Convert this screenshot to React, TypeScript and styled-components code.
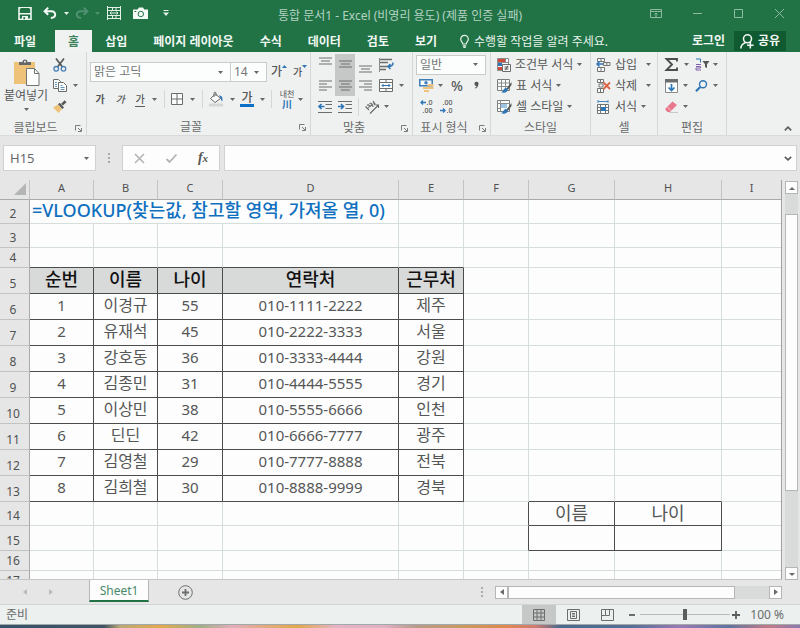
import React from "react";
import styled, { createGlobalStyle, css } from "styled-components";

const GREEN = "#217346";
const INK = "#5a5c5c";
const BLUE = "#2e75b6";
const GOLD = "#efc27a";

const Global = createGlobalStyle`
  * { box-sizing: border-box; }
  html, body { margin: 0; padding: 0; }
  body, button, input, select {
    font-family: "Noto Sans", "Noto Sans CJK KR", sans-serif;
    font-size: 12px;
    line-height: 16px;
    color: #555757;
  }
  button, input, select {
    border: 0;
    padding: 0;
    margin: 0;
    background: transparent;
    border-radius: 0;
    outline: 0;
  }
`;

const Page = styled.div`
  display: flex;
  flex-direction: column;
  height: 100vh;
  overflow: hidden;
  background: #e6e6e6;
`;

const Svg = styled.svg`
  display: block;
  flex: none;
  overflow: visible;
`;

const Caret = ({ color = "#666868" }: { color?: string }) => (
  <Svg width="5" height="3" viewBox="0 0 5 3">
    <path d="M0 0h5L2.5 3z" fill={color} />
  </Svg>
);

/* ---------- title bar ---------- */

const TitleBar = styled.header`
  display: grid;
  grid-template-columns: 180px 1fr 180px;
  align-items: start;
  height: 30px;
  flex: none;
  background: ${GREEN};
  color: #b4d2c2;
`;

const QuickAccess = styled.div`
  display: flex;
  align-items: center;
  height: 26px;
  padding-left: 12px;
`;

const Title = styled.div`
  padding-top: 8px;
  text-align: center;
  white-space: nowrap;
`;

const WindowButtons = styled.div`
  display: flex;
  justify-content: flex-end;
  height: 26px;
`;

const IconButton = styled.button<{ $w: number; $on?: boolean }>`
  display: flex;
  align-items: center;
  justify-content: center;
  flex: none;
  width: ${(p) => p.$w}px;
  height: 100%;
  background: ${(p) => (p.$on ? "#c6c8c8" : "transparent")};
`;

/* ---------- ribbon tabs ---------- */

const TabRow = styled.nav`
  display: flex;
  align-items: stretch;
  height: 22px;
  flex: none;
  background: ${GREEN};
`;

const Tab = styled.button<{ $active?: boolean; $file?: boolean }>`
  padding: ${(p) => (p.$file ? "2px 19px 0 14px" : "2px 13px 0")};
  white-space: nowrap;
  font-weight: 600;
  color: ${(p) => (p.$active ? "#3f8560" : "#f2f8f4")};
  background: ${(p) => (p.$active ? "#f0f2f2" : "transparent")};
`;

const TellMe = styled.button`
  display: flex;
  align-items: center;
  gap: 5px;
  margin-left: 10px;
  padding-top: 1px;
  white-space: nowrap;
  color: #e6f2ea;
`;

const Account = styled.div`
  display: flex;
  align-items: center;
  margin-left: auto;
  padding-right: 14px;
  gap: 9px;
`;

const AccountButton = styled.button<{ $share?: boolean }>`
  display: flex;
  align-items: center;
  justify-content: center;
  gap: 4px;
  height: 20px;
  font-weight: 600;
  white-space: nowrap;
  color: #f2f8f4;
  ${(p) => p.$share && css`width: 52px; background: #0f5a30;`}
`;

/* ---------- ribbon ---------- */

const Ribbon = styled.section`
  display: flex;
  height: 84px;
  flex: none;
  background: #eff1f1;
  border-bottom: 1px solid #d9dada;
`;

const GroupBox = styled.div<{ $w: number }>`
  display: flex;
  flex-direction: column;
  flex: none;
  width: ${(p) => p.$w}px;
  padding-top: 2px;
  border-right: 1px solid #d3d7d6;
`;

const GroupBody = styled.div<{ $pad: number }>`
  display: flex;
  height: 64px;
  padding-left: ${(p) => p.$pad}px;
`;

const GroupFoot = styled.div`
  display: flex;
  align-items: center;
  flex: 1;
  padding-top: 3px;
  color: #6a6c6c;
`;

const GroupName = styled.span`
  flex: 1;
  text-align: center;
  white-space: nowrap;
`;

const Stack = styled.div`
  display: flex;
  flex-direction: column;
`;

const FontStack = styled(Stack)`
  padding-top: 8px;
  gap: 7px;
`;

const Row = styled.div<{ $h?: number }>`
  display: flex;
  align-items: center;
  height: ${(p) => p.$h ?? 21}px;
`;

const Divider = styled.span<{ $w: number }>`
  display: flex;
  justify-content: center;
  width: ${(p) => p.$w}px;
  height: 18px;
  &::before {
    content: "";
    width: 1px;
    background: #d3d7d6;
  }
`;

const PasteButton = styled.button`
  display: flex;
  flex-direction: column;
  align-items: center;
  width: 52px;
  padding: 5px 0 0;
  white-space: nowrap;
`;

const PasteLabel = styled.span`
  margin: 2px 0 4px;
`;

const SelectWrap = styled.label<{ $w: number }>`
  display: grid;
  grid-template-columns: 1fr 12px;
  align-items: center;
  width: ${(p) => p.$w}px;
  height: 20px;
  background: #fcfdfd;
  border: 1px solid #c9cccb;
  & + & { border-left: 0; }
`;

const Select = styled.select`
  appearance: none;
  width: 100%;
  height: 18px;
  padding-left: 3px;
  color: #747676;
`;

const Glyph = styled.span<{ $b?: boolean; $i?: boolean; $u?: boolean; $size?: number }>`
  font-size: ${(p) => p.$size ?? 10}px;
  line-height: 14px;
  font-weight: ${(p) => (p.$b ? 700 : 500)};
  font-style: ${(p) => (p.$i ? "italic" : "normal")};
  border-bottom: 1px solid ${(p) => (p.$u ? INK : "transparent")};
`;

const ColorGlyph = styled(Glyph)`
  border-bottom: 3px solid #0a6fc8;
  padding: 0 1px;
  line-height: 13px;
`;

const Ruby = styled.span`
  display: flex;
  flex-direction: column;
  align-items: center;
  font-size: 8px;
  line-height: 9px;
`;

const RubyBase = styled.span`
  font-size: 10px;
  line-height: 12px;
  font-weight: 700;
  color: ${BLUE};
`;

const Command = styled.button<{ $wide?: boolean }>`
  display: flex;
  align-items: center;
  gap: 4px;
  height: 21px;
  white-space: nowrap;
  & > span { margin-right: ${(p) => (p.$wide ? 5 : 0)}px; }
`;

const Percent = styled.span`
  font-size: 14px;
  font-weight: 500;
`;

const RibbonEnd = styled.div`
  flex: 1;
  display: flex;
  align-items: flex-end;
  justify-content: flex-end;
  padding: 0 8px 4px 0;
`;

const CollapseButton = styled.button`
  display: flex;
`;

/* ---------- formula bar ---------- */

const FormulaBar = styled.div`
  display: flex;
  align-items: center;
  height: 44px;
  flex: none;
  padding: 0 3px 0 3px;
`;

const Field = styled.div<{ $w?: number }>`
  display: flex;
  align-items: center;
  height: 26px;
  ${(p) => (p.$w ? css`width: ${p.$w}px; flex: none;` : css`flex: 1; min-width: 0;`)}
  background: #fdfdfd;
  border: 1px solid #d0d2d1;
`;

const FieldInput = styled.input`
  flex: 1;
  min-width: 0;
  height: 100%;
  padding-left: 6px;
  font-size: 13px;
  color: #666868;
`;

const Grip = styled.span`
  display: flex;
  justify-content: center;
  width: 26px;
`;

const FormulaButtons = styled(Field)`
  justify-content: space-around;
  margin-right: 4px;
`;

/* ---------- grid ---------- */

const SheetArea = styled.main`
  display: flex;
  flex: 1;
  min-height: 0;
`;

const Viewport = styled.div`
  flex: 1;
  min-width: 0;
  overflow: hidden;
  border-right: 1px solid #9fa1a1;
  border-bottom: 1px solid #c3c6c5;
  background: #fdfdfd;
`;

const Table = styled.table`
  width: 100%;
  table-layout: fixed;
  border-collapse: separate;
  border-spacing: 0;
`;

const Col = styled.col<{ $w?: number }>`
  width: ${(p) => (p.$w ? p.$w + "px" : "auto")};
`;

const ColHead = styled.th`
  height: 20px;
  padding: 0 0 4px;
  font-weight: 400;
  font-size: 11px;
  line-height: 14px;
  color: #505252;
  background: #e6e6e6;
  border-right: 1px solid #c2c4c4;
  border-bottom: 1px solid #a9abab;
  &:last-child { border-right: 0; }
`;

const Corner = styled(ColHead)`
  padding: 0 3px 2px 0;
  & > svg { margin-left: auto; }
`;

const SheetRow = styled.tr<{ $h: number }>`
  height: ${(p) => p.$h}px;
`;

const RowHead = styled.th`
  padding: 0 3px 0 0;
  vertical-align: bottom;
  font-weight: 400;
  font-size: 12px;
  line-height: 18px;
  color: #505252;
  background: #e6e6e6;
  border-right: 1px solid #a9abab;
  border-bottom: 1px solid #c2c4c4;
`;

type CellKind = "head" | "num" | "text" | "formula" | "big";
const Cell = styled.td<{ $kind?: CellKind; $r?: boolean; $b?: boolean }>`
  padding: 0;
  vertical-align: top;
  text-align: center;
  white-space: nowrap;
  line-height: 22px;
  font-size: 16px;
  color: #555757;
  border-right: 1px solid ${(p) => (p.$r ? "#4b4d4c" : "#d5dedb")};
  border-bottom: 1px solid ${(p) => (p.$b ? "#4b4d4c" : "#d5dedb")};
  &:last-child { border-right: 0; }
  ${(p) => p.$kind === "head" && css`
    font-size: 18px; font-weight: 500; color: #111; background: #d8d9d9;
  `}
  ${(p) => p.$kind === "num" && css`font-size: 15px;`}
  ${(p) => p.$kind === "big" && css`font-size: 18px;`}
  ${(p) => p.$kind === "formula" && css`
    font-size: 18px; line-height: 20px; font-weight: 500; color: #0f70bf; text-align: left; padding-left: 2px;
  `}
`;

const VScroll = styled.div`
  display: flex;
  flex-direction: column;
  width: 18px;
  padding: 1px 2px 0 3px;
`;

const HScroll = styled.div`
  display: flex;
  width: 287px;
  height: 13px;
`;

const ScrollButton = styled.button`
  display: flex;
  align-items: center;
  justify-content: center;
  flex: none;
  width: 13px;
  height: 13px;
  background: #fdfdfd;
  border: 1px solid #b5b7b7;
`;

const Track = styled.div<{ $grow: number }>`
  flex: ${(p) => p.$grow} 1 0;
  background: #d9dada;
`;

const Thumb = styled(Track)`
  background: #fdfdfd;
  border: 1px solid #b5b7b7;
`;

/* ---------- bottom bars ---------- */

const SheetTabs = styled.div`
  display: flex;
  align-items: center;
  height: 24px;
  flex: none;
  padding-right: 18px;
`;

const SheetNav = styled.div`
  display: flex;
  width: 89px;
  padding-left: 12px;
  height: 100%;
`;

const SheetTab = styled.button`
  align-self: flex-start;
  width: 60px;
  height: 22px;
  padding-top: 2px;
  color: #4a8a68;
  background: #fdfdfd;
  border-right: 1px solid #b5b7b7;
  border-left: 1px solid #b5b7b7;
  border-bottom: 2px solid ${GREEN};
`;

const Spacer = styled.span`
  flex: 1;
`;

const StatusBar = styled.footer`
  display: flex;
  align-items: center;
  height: 20px;
  flex: none;
  padding: 0 16px 0 6px;
  background: #ecf0ef;
  border-top: 1px solid #d2d4d4;
  color: #6a6c6c;
`;

const Slider = styled.input`
  appearance: none;
  width: 90px;
  height: 12px;
  background: linear-gradient(#b9bbbb, #b9bbbb) center / 100% 1px no-repeat;
  &::-webkit-slider-thumb {
    appearance: none;
    width: 4px;
    height: 11px;
    background: #5c5e5e;
  }
`;

const ZoomText = styled.span`
  width: 42px;
  text-align: right;
  white-space: nowrap;
`;

const Wallpaper = styled.div`
  height: 4px;
  flex: none;
  border-top: 1px solid #a3a8ab;
  background: linear-gradient(
    90deg, #36536a 0, #3f5565 13%, #b9a873 15%, #e3ab4f 20%, #9fae86 25%, #e2aebb 29%,
    #e0a94a 37%, #e4b4c4 42%, #dfb2c4 48%, #b89a8a 52%, #c99a5c 58%, #e08a4e 63%,
    #cf7a70 67%, #4a6a8c 70%, #557097 79%, #9a7ab4 85%, #5f74a0 91%, #c07a88 96%, #8b79b0 100%
  );
`;

/* ---------- icons ---------- */

const SaveIcon = () => (
  <Svg width="14" height="13" viewBox="0 0 14 13">
    <path d="M1 .8h12v11.4H1z" fill="none" stroke="#eef6f1" strokeWidth="1.6" />
    <path d="M3 1h8v5.4H3z" fill={GREEN} />
    <path d="M1 6h12v1.4H1zM4 9h6v3.6H4z" fill="#eef6f1" />
    <path d="M5.4 10.2h1.7v2H5.4z" fill={GREEN} />
  </Svg>
);

const UndoIcon = ({ flip, color = "#f4faf6" }: { flip?: boolean; color?: string }) => (
  <Svg width="14" height="12" viewBox="0 0 14 12">
    <g transform={flip ? "matrix(-1 0 0 1 14 0)" : undefined} fill="none" stroke={color} strokeWidth="2">
      <path d="M5.2.6 1.6 4.2l3.6 3.6M2 4.2h6.2c5.4 0 5.4 6.6-.4 6.8" />
    </g>
  </Svg>
);

const PageWidthIcon = () => (
  <Svg width="14" height="14" viewBox="0 0 14 14" fill="none" stroke="#e3f0e8" strokeWidth="1">
    <path d="M.5 0v14M13.5 0v14M.5 1.5h13M.5 4.5h13M.5 9.5h13M.5 12.5h13M5.5 1.5v3M9 1.5v3M5.5 9.5v3M9 9.5v3M3 7h8M4.5 5.5 3 7l1.5 1.500M9.500 5.500 11 7 9.500 8.500" />
  </Svg>
);

const CameraIcon = () => (
  <Svg width="15" height="12" viewBox="0 0 15 12">
    <path d="M0 2.500h4.500L6 .5h4l1.300 2H15V12H0z" fill="#f4faf6" />
    <circle cx="7.800" cy="7" r="2.700" fill="none" stroke={GREEN} strokeWidth="1" />
    <path d="M1.500 4h1.800v1H1.500z" fill={GREEN} />
  </Svg>
);

const CustomizeIcon = () => (
  <Svg width="6" height="6" viewBox="0 0 6 6">
    <path d="M.5 0h5v1h-5zM0 2.500h6L3 6z" fill="#e3f0e8" />
  </Svg>
);

const WIN = "#8fbba3";
const RibbonModeIcon = () => (
  <Svg width="12" height="9" viewBox="0 0 12 9" fill="none" stroke={WIN}>
    <path d="M.5.5h11v8H.5zM.5 2.500h11M6 8V4M4.500 5.500 6 4l1.500 1.500" />
  </Svg>
);
const MinIcon = () => (
  <Svg width="9" height="9" viewBox="0 0 9 9"><path d="M0 4.500h9" stroke={WIN} /></Svg>
);
const MaxIcon = () => (
  <Svg width="9" height="9" viewBox="0 0 9 9"><path d="M.5.5h8v8h-8z" fill="none" stroke={WIN} /></Svg>
);
const CloseIcon = () => (
  <Svg width="9" height="9" viewBox="0 0 9 9"><path d="m0 0 9 9M9 0 0 9" stroke={WIN} /></Svg>
);

const BulbIcon = () => (
  <Svg width="9" height="13" viewBox="0 0 9 13" fill="none" stroke="#e6f2ea" strokeWidth="1.200">
    <path d="M2.800 9C2.800 7 .7 6.500.7 4.200a3.800 3.800 0 0 1 7.600 0C8.300 6.500 6.200 7 6.200 9zM2.800 10.800h3.400M3.300 12.400h2.400" />
  </Svg>
);

const PersonIcon = () => (
  <Svg width="14" height="15" viewBox="0 0 14 15" fill="none" stroke="#f2f8f4" strokeWidth="1.600">
    <circle cx="7.500" cy="4.800" r="4" />
    <path d="M.8 14.500c.2-3.200 2-5 4.600-5.800M7 11.200h6.600M10.300 8v6.500" />
  </Svg>
);

const PasteIcon = () => (
  <Svg width="27" height="27" viewBox="0 0 27 27">
    <path d="M1 3h21v22H1z" fill={GOLD} />
    <path d="M6 6V3h3.500C9.500-.3 14.500-.3 14.500 3H18v3z" fill="#666868" />
    <circle cx="12" cy="2.800" r="1" fill="#eff1f1" />
    <path d="M13.500 9.500h8l4.500 5v12H13.500z" fill="#fcfdfd" stroke="#727474" />
    <path d="M21.500 9.500v5H26" fill="none" stroke="#727474" />
  </Svg>
);

const CutIcon = () => (
  <Svg width="14" height="14" viewBox="0 0 14 14" fill="none">
    <path d="M3 .5 9.500 9M11 .5 4.500 9" stroke="#555757" strokeWidth="1.700" />
    <circle cx="3.200" cy="10.800" r="2.300" stroke="#4a82b8" strokeWidth="1.300" />
    <circle cx="10.500" cy="10.800" r="2.300" stroke="#4a82b8" strokeWidth="1.300" />
  </Svg>
);

const CopyIcon = () => (
  <Svg width="14" height="13" viewBox="0 0 14 13" fill="#fcfdfd" stroke="#696b6b">
    <path d="M.5.5h5l2 2v7h-7z" />
    <path d="M5.500 3.500h5l3 3v6h-8z" />
    <path d="M2 3.500h2M2 5.500h2M2 7.500h2M7.500 6.500h2M7.500 8.500h4M7.500 10.500h4" stroke="#5d91bf" />
  </Svg>
);

const PainterIcon = () => (
  <Svg width="14" height="13" viewBox="0 0 14 13">
    <path d="m0 7.500 5-3 4 4.500L5.500 13z" fill={GOLD} />
    <path d="m5 4.300 1.700-1.500L11 7.500 9.400 9z" fill="#555757" />
    <path d="M9 4.600 12.600 1.200" stroke="#555757" strokeWidth="2.600" />
  </Svg>
);

const StepWrap = styled.span`
  display: flex;
  align-items: flex-start;
`;
const FontStep = ({ up, size }: { up?: boolean; size: number }) => (
  <StepWrap>
    <Glyph $size={size}>가</Glyph>
    <Svg width="5" height="3" viewBox="0 0 5 3">
      <path d={up ? "M0 3h5L2.500 0z" : "M0 0h5L2.500 3z"} fill={BLUE} />
    </Svg>
  </StepWrap>
);

const BordersIcon = () => (
  <Svg width="12" height="12" viewBox="0 0 12 12" fill="#fcfdfd" stroke="#6a6c6c">
    <path d="M.5.5h11v11H.5zM6 .5v11M.5 6h11" />
  </Svg>
);

const FillIcon = () => (
  <Svg width="15" height="15" viewBox="0 0 15 15">
    <path d="M6.500 2 11.500 6.500 6 10.500 1.500 6.500z" fill="#fcfdfd" stroke="#666868" />
    <path d="M5 5V1.200C5-.2 7-.2 7 1.200V4" fill="none" stroke="#666868" />
    <path d="M10 3.500c3 0 4 2 3.300 6-1-.5-1.300-2.500-1.800-3.500z" fill={BLUE} />
    <path d="M0 11.500h14v3H0z" fill="#d3d6d5" />
  </Svg>
);

const Lines = ({ y, x }: { y: number[]; x: [number, number][] }) => (
  <Svg width="14" height="18" viewBox="0 0 14 18" stroke="#6c6e6e">
    {y.map((v, i) => (
      <path key={v} d={`M${x[i % x.length][0]} ${v}H${x[i % x.length][1]}`} />
    ))}
  </Svg>
);

const WrapIcon = () => (
  <Svg width="15" height="14" viewBox="0 0 15 14" fill="none">
    <path d="M.5 0v14" stroke="#8a8c8c" />
    <path d="M1 1.500h12M1 4.500h8M1 8.500h8M1 11.500h6" stroke="#6c6e6e" strokeWidth="1.400" />
    <path d="M14 4.500c0 3-1.500 4-4.500 4M11.500 6 9 8.500l2.500 2.500" stroke={BLUE} strokeWidth="1.500" />
  </Svg>
);

const MergeIcon = () => (
  <Svg width="14" height="13" viewBox="0 0 14 13" fill="#fcfdfd" stroke="#6c6e6e">
    <path d="M.5.5h13v12H.5zM.5 3.500h13M.5 9.500h13M7 .5v3M7 9.500v3" />
    <path d="M3 6.500h8M4.500 5 3 6.500 4.500 8M9.500 5 11 6.500 9.500 8" fill="none" stroke={BLUE} />
  </Svg>
);

const IndentIcon = ({ out }: { out?: boolean }) => (
  <Svg width="14" height="12" viewBox="0 0 14 12" fill="none" stroke="#6c6e6e">
    <path d="M0 .5h14M7.500 3.500H14M7.500 7.500H14M0 11.500h14" />
    <path d={out ? "M6.500 5.500H1M3.500 3 1 5.500 3.500 8" : "M0 5.500h5.500M3 3l2.500 2.500L3 8"} stroke={BLUE} strokeWidth="1.700" />
  </Svg>
);

const OrientIcon = () => (
  <Svg width="15" height="14" viewBox="0 0 15 14" fill="none" stroke="#666868" strokeWidth="1.100">
    <path d="M5 13.500 13.500 5M10.500 5h3v3" />
    <path d="M.5 6.500 4 10M2 5.200c2-1 3.400.6 1.500 2.600M4.500 3.500c2-1 3 1 3.500 3.500M5 6.500l2-2M8 1l2.500 3.500M8 3c1.500-.5 2 1 1 2" />
  </Svg>
);

const CurrencyIcon = () => (
  <Svg width="15" height="14" viewBox="0 0 15 14">
    <path d="M.8.8h12.400v6H.8z" fill="#fcfdfd" stroke="#3a7db8" strokeWidth="1.500" />
    <circle cx="7" cy="3.800" r="1.700" fill="#3a7db8" />
    <path d="M8.500 5h6v2.200h-6zM4 8h6.500v2H4zM5 11h5v2H5zM9.500 8h5v2h-5z" fill={GOLD} />
  </Svg>
);

const CommaIcon = () => (
  <Svg width="5" height="7" viewBox="0 0 5 7">
    <path d="M.5 2a2 2 0 1 1 3.900.3C4.400 4.600 3 6 1 6.500L.8 5.700C2 5.200 2.500 4.600 2.500 3.900 1.300 4 .5 3.200.5 2z" fill="#555757" />
  </Svg>
);

const DecimalBox = styled.span`
  display: flex;
  flex-direction: column;
  font-size: 7px;
  line-height: 8px;
  font-weight: 500;
`;
const DecimalLine = styled.span<{ $end?: boolean }>`
  display: flex;
  align-items: center;
  justify-content: ${(p) => (p.$end ? "flex-end" : "flex-start")};
  gap: 1px;
`;
const SmallArrow = ({ left }: { left?: boolean }) => (
  <Svg width="6" height="5" viewBox="0 0 6 5" fill="none" stroke={BLUE} strokeWidth="1.300">
    <path d={left ? "M6 2.500H1M3 .5l-2 2 2 2" : "M0 2.500h5M3 .5l2 2-2 2"} />
  </Svg>
);

const CondIcon = () => (
  <Svg width="14" height="14" viewBox="0 0 14 14">
    <path d="M.5.5h11v12H.5z" fill="#fcfdfd" stroke="#8a8c8c" />
    <path d="M1 1h7v3H1z" fill="#cf4b3c" />
    <path d="M1 5h4v3H1z" fill={BLUE} />
    <path d="M1 9h4v3H1z" fill="#cf4b3c" />
    <path d="M8.500 1v3M1 4.500h11" stroke="#8a8c8c" />
    <path d="M5.500 6.500h8v7h-8z" fill="#fcfdfd" stroke="#6c6e6e" />
    <path d="M7.500 9h4M7.500 11h4M10.800 7.800l-2.500 4.500" stroke="#555757" />
  </Svg>
);

const TableStyleIcon = ({ cell }: { cell?: boolean }) => (
  <Svg width="15" height="14" viewBox="0 0 15 14">
    <path d="M.5.5h12v11H.5z" fill="#fcfdfd" stroke="#7a7c7c" />
    {cell ? (
      <>
        <path d="M.5 3.500h12M3.500.5v11M.5 8.500h3" stroke="#8a8c8c" />
        <path d="M4 4h6v4H4z" fill="#9fc3e3" />
      </>
    ) : (
      <path d="M.5 4h12M.5 7.500h12M4.500.5v11M8.500.5v11" stroke="#8a8c8c" />
    )}
    <path d="m14.500 3-5 6.500 1.500 1.200L14.500 6z" fill="#555757" />
    <path d="M9.300 9c-2.500-.3-2.500 2.500-5 4.300 3 .8 6.700.3 6.500-3z" fill={BLUE} />
  </Svg>
);

const InsertIcon = () => (
  <Svg width="15" height="14" viewBox="0 0 15 14" fill="none">
    <path d="M1.500.5h7v3h-7zM5 .5v3M1.500 9.500h7v4h-7zM5 9.500v4" stroke="#727474" fill="#fcfdfd" />
    <path d="M7.500 4.500h6.500v3H7.500zM10.800 4.500v3" stroke="#727474" />
    <path d="M7 6H1M3.500 3.500 1 6l2.500 2.500" stroke={BLUE} strokeWidth="1.500" />
  </Svg>
);

const DeleteIcon = () => (
  <Svg width="15" height="14" viewBox="0 0 15 14" fill="none">
    <path d="M1.500.5h6v3h-6zM4.500.5v3M1.500 9.500h6v4h-6zM4.500 9.500v4M3 5h4v3H3z" stroke="#727474" fill="#fcfdfd" />
    <path d="m7.500 3.500 6.500 6.500M14 3.500 7.500 10" stroke="#dd6242" strokeWidth="1.800" />
  </Svg>
);

const FormatIcon = () => (
  <Svg width="15" height="14" viewBox="0 0 15 14" fill="none">
    <path d="M1.500 4.500h11v9h-11zM1.500 7.500h11M1.500 10.500h11M4.500 4.500v9M9.500 4.500v9" stroke="#727474" fill="#fcfdfd" />
    <path d="M5 7h5v4H5z" fill={BLUE} />
    <path d="M2 1.500h10M2 0v3M12 0v3" stroke="#4a88bf" />
  </Svg>
);

const SigmaIcon = () => (
  <Svg width="13" height="13" viewBox="0 0 13 13">
    <path d="M12 3.500V1H1.500L7 6.500 1.500 12H12V9.500" fill="none" stroke="#4c4e4e" strokeWidth="1.900" />
  </Svg>
);

const DownFillIcon = () => (
  <Svg width="13" height="14" viewBox="0 0 13 14">
    <path d="M.5.5h12v13H.5z" fill="#fcfdfd" stroke="#8a8c8c" />
    <path d="M0 0h13v3.500H0z" fill="#6c6e6e" />
    <path d="M6.500 5v6.500M3.500 8.500l3 3 3-3" fill="none" stroke={BLUE} strokeWidth="1.700" />
  </Svg>
);

const EraserIcon = () => (
  <Svg width="13" height="12" viewBox="0 0 13 12">
    <path d="M.5 7.500 7.500.5 12 4 5 11H2.500L.5 9z" fill="#e8788c" />
    <path d="m2.500 6 4 4" stroke="#f6c9d1" />
    <path d="M4 11.500h9" stroke="#c9cbcb" />
  </Svg>
);

const SortIcon = () => (
  <Svg width="15" height="13" viewBox="0 0 15 13" fill="none">
    <path d="M1 6.500h5M1 8.500h4.500V10H1v2h5" stroke="#8161ab" />
    <path d="M1 1h4.500v3.500" stroke={BLUE} />
    <path d="M7.500 3h7L12 6.200V10l-2-1V6.200z" fill="#555757" />
  </Svg>
);

const FindIcon = () => (
  <Svg width="13" height="12" viewBox="0 0 13 12" fill="none" stroke={BLUE}>
    <circle cx="8" cy="4.300" r="3.500" strokeWidth="1.400" />
    <path d="M5.200 7 1 11.200" strokeWidth="2.200" />
  </Svg>
);

const LauncherIcon = () => (
  <Svg width="7" height="7" viewBox="0 0 7 7" fill="none" stroke="#7a7c7c">
    <path d="M.5 5.500v-5h5M3 3l3 3M6.500 3v3.500H3" />
  </Svg>
);

const Dots = () => (
  <Svg width="2" height="10" viewBox="0 0 2 10" fill="#a8aaaa">
    <path d="M0 0h2v2H0zM0 4h2v2H0zM0 8h2v2H0z" />
  </Svg>
);

const FxText = styled.em`
  font-family: "Liberation Serif", serif;
  font-size: 14px;
  font-weight: 700;
  line-height: 16px;
`;
const FxSub = styled.small`
  font-size: 11px;
`;

const Arrow = ({ dir, color = "#6a6c6c" }: { dir: "up" | "down" | "left" | "right"; color?: string }) => {
  const d = { up: "M0 5h6L3 2z", down: "M0 2h6L3 5z", left: "M5 0v6L1 3z", right: "M1 0v6l4-3z" }[dir];
  return <Svg width="6" height="6" viewBox="0 0 6 6"><path d={d} fill={color} /></Svg>;
};

const Chevron = ({ up }: { up?: boolean }) => (
  <Svg width="8" height="5" viewBox="0 0 8 5" fill="none" stroke="#5c5e5e" strokeWidth="1.700">
    <path d={up ? "M.8 4.300 4 1.200l3.200 3.100" : "M.8.800 4 3.900 7.200.800"} />
  </Svg>
);

/* ---------- composed parts ---------- */

const Group = ({ w, pad, name, launcher, children }: {
  w: number; pad: number; name: string; launcher?: boolean; children: React.ReactNode;
}) => (
  <GroupBox $w={w}>
    <GroupBody $pad={pad}>{children}</GroupBody>
    <GroupFoot>
      <GroupName>{name}</GroupName>
      {launcher && (
        <IconButton $w={15} aria-label={`${name} 설정`}><LauncherIcon /></IconButton>
      )}
    </GroupFoot>
  </GroupBox>
);

const Drop = ({ w, label }: { w: number; label: string }) => (
  <IconButton $w={w} aria-label={label}><Caret /></IconButton>
);

const RibbonSelect = ({ w, label, value }: { w: number; label: string; value: string }) => (
  <SelectWrap $w={w}>
    <Select aria-label={label} defaultValue={value}><option>{value}</option></Select>
    <Caret />
  </SelectWrap>
);

const columns = ["A", "B", "C", "D", "E", "F", "G", "H", "I"];
const widths = [64, 64, 65, 176, 65, 65, 86, 107];
const people = [
  ["1", "이경규", "55", "010-1111-2222", "제주"],
  ["2", "유재석", "45", "010-2222-3333", "서울"],
  ["3", "강호동", "36", "010-3333-4444", "강원"],
  ["4", "김종민", "31", "010-4444-5555", "경기"],
  ["5", "이상민", "38", "010-5555-6666", "인천"],
  ["6", "딘딘", "42", "010-6666-7777", "광주"],
  ["7", "김영철", "29", "010-7777-8888", "전북"],
  ["8", "김희철", "30", "010-8888-9999", "경북"],
];
const rows: { n: number; h: number; cells: string[] }[] = [
  { n: 3, h: 24, cells: [] },
  { n: 4, h: 20, cells: [] },
  { n: 5, h: 26, cells: ["순번", "이름", "나이", "연락처", "근무처"] },
  ...people.map((cells, i) => ({ n: i + 6, h: 26, cells })),
  { n: 14, h: 24, cells: ["", "", "", "", "", "", "이름", "나이"] },
  { n: 15, h: 25, cells: [] },
  { n: 16, h: 20, cells: [] },
  { n: 17, h: 20, cells: [] },
];

const kindOf = (n: number, c: number): CellKind | undefined => {
  if (n === 5 && c < 5) return "head";
  if (n === 14) return "big";
  return c === 1 || c === 4 ? "text" : "num";
};
const darkRight = (n: number, c: number) =>
  (n >= 5 && n <= 13 && c <= 4) || ((n === 14 || n === 15) && c >= 5 && c <= 7);
const darkBottom = (n: number, c: number) =>
  (n >= 4 && n <= 13 && c <= 4) || (n >= 13 && n <= 15 && (c === 6 || c === 7));

export default function App() {
  return (
    <Page>
      <Global />
      <TitleBar>
        <QuickAccess>
          <IconButton $w={26} aria-label="저장"><SaveIcon /></IconButton>
          <IconButton $w={24} aria-label="실행 취소"><UndoIcon /></IconButton>
          <IconButton $w={8} aria-label="실행 취소 목록"><Caret color="#e3f0e8" /></IconButton>
          <IconButton $w={24} aria-label="다시 실행"><UndoIcon flip color="#4f9271" /></IconButton>
          <IconButton $w={6} aria-label="다시 실행 목록"><Caret color="#4f9271" /></IconButton>
          <IconButton $w={28} aria-label="페이지 너비"><PageWidthIcon /></IconButton>
          <IconButton $w={25} aria-label="카메라"><CameraIcon /></IconButton>
          <IconButton $w={26} aria-label="빠른 실행 도구 모음 사용자 지정"><CustomizeIcon /></IconButton>
        </QuickAccess>
        <Title>통합 문서1 - Excel (비영리 용도) (제품 인증 실패)</Title>
        <WindowButtons>
          <IconButton $w={42} aria-label="리본 메뉴 표시 옵션"><RibbonModeIcon /></IconButton>
          <IconButton $w={41} aria-label="최소화"><MinIcon /></IconButton>
          <IconButton $w={41} aria-label="최대화"><MaxIcon /></IconButton>
          <IconButton $w={41} aria-label="닫기"><CloseIcon /></IconButton>
        </WindowButtons>
      </TitleBar>

      <TabRow>
        <Tab $file>파일</Tab>
        <Tab $active>홈</Tab>
        <Tab>삽입</Tab>
        <Tab>페이지 레이아웃</Tab>
        <Tab>수식</Tab>
        <Tab>데이터</Tab>
        <Tab>검토</Tab>
        <Tab>보기</Tab>
        <TellMe><BulbIcon />수행할 작업을 알려 주세요.</TellMe>
        <Account>
          <AccountButton>로그인</AccountButton>
          <AccountButton $share><PersonIcon />공유</AccountButton>
        </Account>
      </TabRow>

      <Ribbon>
        <Group w={87} pad={0} name="클립보드" launcher>
          <PasteButton>
            <PasteIcon />
            <PasteLabel>붙여넣기</PasteLabel>
            <Caret />
          </PasteButton>
          <Stack>
            <Row><IconButton $w={16} aria-label="잘라내기"><CutIcon /></IconButton></Row>
            <Row>
              <IconButton $w={16} aria-label="복사"><CopyIcon /></IconButton>
              <Drop w={14} label="복사 옵션" />
            </Row>
            <Row><IconButton $w={16} aria-label="서식 복사"><PainterIcon /></IconButton></Row>
          </Stack>
        </Group>

        <Group w={224} pad={3} name="글꼴" launcher>
          <FontStack>
            <Row $h={20}>
              <RibbonSelect w={141} label="글꼴" value="맑은 고딕" />
              <RibbonSelect w={36} label="글꼴 크기" value="14" />
              <IconButton $w={24} aria-label="글꼴 크기 크게"><FontStep up size={12} /></IconButton>
              <IconButton $w={18} aria-label="글꼴 크기 작게"><FontStep size={10} /></IconButton>
            </Row>
            <Row $h={20}>
              <IconButton $w={20} aria-label="굵게"><Glyph $b>가</Glyph></IconButton>
              <IconButton $w={20} aria-label="기울임꼴"><Glyph $i>가</Glyph></IconButton>
              <IconButton $w={20} aria-label="밑줄"><Glyph $u>가</Glyph></IconButton>
              <Drop w={8} label="밑줄 옵션" />
              <Divider $w={13} />
              <IconButton $w={12} aria-label="테두리"><BordersIcon /></IconButton>
              <Drop w={18} label="테두리 옵션" />
              <Divider $w={3} />
              <IconButton $w={24} aria-label="채우기 색"><FillIcon /></IconButton>
              <Drop w={8} label="채우기 색 옵션" />
              <IconButton $w={22} aria-label="글꼴 색"><ColorGlyph $size={12}>가</ColorGlyph></IconButton>
              <Drop w={8} label="글꼴 색 옵션" />
              <Divider $w={11} />
              <IconButton $w={20} aria-label="윗주 필드"><Ruby>내천<RubyBase>川</RubyBase></Ruby></IconButton>
              <Drop w={6} label="윗주 옵션" />
            </Row>
          </FontStack>
        </Group>

        <Group w={102} pad={4} name="맞춤" launcher>
          <Stack>
            <Row>
              <IconButton $w={20} aria-label="위쪽 맞춤"><Lines y={[2, 5, 8]} x={[[1, 14], [3, 12]]} /></IconButton>
              <IconButton $w={20} $on aria-label="가운데 맞춤"><Lines y={[5, 8, 11]} x={[[1, 14], [3, 12]]} /></IconButton>
              <IconButton $w={20} aria-label="아래쪽 맞춤"><Lines y={[10, 13, 16]} x={[[1, 14], [3, 12]]} /></IconButton>
              <IconButton $w={22} aria-label="텍스트 줄 바꿈"><WrapIcon /></IconButton>
            </Row>
            <Row>
              <IconButton $w={20} aria-label="왼쪽 맞춤"><Lines y={[4, 7, 10, 13]} x={[[1, 14], [1, 9]]} /></IconButton>
              <IconButton $w={20} $on aria-label="가로 가운데 맞춤"><Lines y={[4, 7, 10, 13]} x={[[1, 14], [3, 12]]} /></IconButton>
              <IconButton $w={20} aria-label="오른쪽 맞춤"><Lines y={[4, 7, 10, 13]} x={[[1, 14], [6, 14]]} /></IconButton>
              <IconButton $w={22} aria-label="병합하고 가운데 맞춤"><MergeIcon /></IconButton>
              <Drop w={8} label="병합 옵션" />
            </Row>
            <Row>
              <IconButton $w={20} aria-label="내어쓰기"><IndentIcon out /></IconButton>
              <IconButton $w={20} aria-label="들여쓰기"><IndentIcon /></IconButton>
              <Divider $w={6} />
              <IconButton $w={22} aria-label="방향"><OrientIcon /></IconButton>
              <Drop w={6} label="방향 옵션" />
            </Row>
          </Stack>
        </Group>

        <Group w={78} pad={3} name="표시 형식" launcher>
          <Stack>
            <Row><RibbonSelect w={70} label="표시 형식" value="일반" /></Row>
            <Row>
              <IconButton $w={20} aria-label="회계 표시 형식"><CurrencyIcon /></IconButton>
              <Drop w={8} label="회계 옵션" />
              <IconButton $w={26} aria-label="백분율 스타일"><Percent>%</Percent></IconButton>
              <IconButton $w={12} aria-label="쉼표 스타일"><CommaIcon /></IconButton>
            </Row>
            <Row>
              <IconButton $w={20} aria-label="자릿수 늘림">
                <DecimalBox>
                  <DecimalLine><SmallArrow left />.0</DecimalLine>
                  <DecimalLine $end>.00</DecimalLine>
                </DecimalBox>
              </IconButton>
              <IconButton $w={20} aria-label="자릿수 줄임">
                <DecimalBox>
                  <DecimalLine $end>.00</DecimalLine>
                  <DecimalLine><SmallArrow />.0</DecimalLine>
                </DecimalBox>
              </IconButton>
            </Row>
          </Stack>
        </Group>

        <Group w={100} pad={6} name="스타일">
          <Stack>
            <Command><CondIcon />조건부 서식<Caret /></Command>
            <Command><TableStyleIcon />표 서식<Caret /></Command>
            <Command><TableStyleIcon cell />셀 스타일<Caret /></Command>
          </Stack>
        </Group>

        <Group w={67} pad={5} name="셀">
          <Stack>
            <Command $wide><InsertIcon /><span>삽입</span><Caret /></Command>
            <Command $wide><DeleteIcon /><span>삭제</span><Caret /></Command>
            <Command><FormatIcon /><span>서식</span><Caret /></Command>
          </Stack>
        </Group>

        <Group w={69} pad={5} name="편집">
          <Stack>
            <Row>
              <IconButton $w={16} aria-label="자동 합계"><SigmaIcon /></IconButton>
              <Drop w={14} label="합계 옵션" />
              <IconButton $w={18} aria-label="정렬 및 필터"><SortIcon /></IconButton>
              <Drop w={8} label="정렬 옵션" />
            </Row>
            <Row>
              <IconButton $w={16} aria-label="채우기"><DownFillIcon /></IconButton>
              <Drop w={12} label="채우기 옵션" />
              <IconButton $w={20} aria-label="찾기 및 선택"><FindIcon /></IconButton>
              <Drop w={8} label="찾기 옵션" />
            </Row>
            <Row>
              <IconButton $w={16} aria-label="지우기"><EraserIcon /></IconButton>
              <Drop w={12} label="지우기 옵션" />
            </Row>
          </Stack>
        </Group>
        <RibbonEnd>
          <CollapseButton aria-label="리본 메뉴 축소"><Chevron up /></CollapseButton>
        </RibbonEnd>
      </Ribbon>

      <FormulaBar>
        <Field $w={93}>
          <FieldInput aria-label="이름 상자" defaultValue="H15" />
          <Drop w={18} label="이름 목록" />
        </Field>
        <Grip><Dots /></Grip>
        <FormulaButtons $w={98}>
          <IconButton $w={30} aria-label="취소">
            <Svg width="9" height="9" viewBox="0 0 9 9"><path d="m0 0 9 9M9 0 0 9" stroke="#b2b4b4" strokeWidth="1.500" /></Svg>
          </IconButton>
          <IconButton $w={30} aria-label="입력">
            <Svg width="11" height="9" viewBox="0 0 11 9"><path d="m.5 5 3 3L10.500.500" fill="none" stroke="#b2b4b4" strokeWidth="1.800" /></Svg>
          </IconButton>
          <IconButton $w={30} aria-label="함수 삽입"><FxText>f<FxSub>x</FxSub></FxText></IconButton>
        </FormulaButtons>
        <Field>
          <FieldInput aria-label="수식 입력줄" />
          <IconButton $w={17} aria-label="수식 입력줄 확장"><Chevron /></IconButton>
        </Field>
      </FormulaBar>

      <SheetArea>
        <Viewport>
          <Table>
            <colgroup>
              <Col $w={30} />
              {widths.map((w, i) => <Col key={i} $w={w} />)}
              <Col />
            </colgroup>
            <thead>
              <tr>
                <Corner aria-label="모두 선택">
                  <Svg width="12" height="12" viewBox="0 0 12 12"><path d="M12 0v12H0z" fill="#b4b6b6" /></Svg>
                </Corner>
                {columns.map((c) => <ColHead key={c}>{c}</ColHead>)}
              </tr>
            </thead>
            <tbody>
              <SheetRow $h={24}>
                <RowHead>2</RowHead>
                <Cell colSpan={4} $kind="formula">=VLOOKUP(찾는값, 참고할 영역, 가져올 열, 0)</Cell>
                {columns.slice(4).map((c) => <Cell key={c} />)}
              </SheetRow>
              {rows.map((r) => (
                <SheetRow key={r.n} $h={r.h}>
                  <RowHead>{r.n}</RowHead>
                  {columns.map((c, i) => (
                    <Cell key={c} $kind={kindOf(r.n, i)} $r={darkRight(r.n, i)} $b={darkBottom(r.n, i)}>
                      {r.cells[i]}
                    </Cell>
                  ))}
                </SheetRow>
              ))}
            </tbody>
          </Table>
        </Viewport>
        <VScroll>
          <ScrollButton aria-label="위로"><Arrow dir="up" /></ScrollButton>
          <Track $grow={20} />
          <Thumb $grow={277} />
          <Track $grow={76} />
          <ScrollButton aria-label="아래로"><Arrow dir="down" /></ScrollButton>
        </VScroll>
      </SheetArea>

      <SheetTabs>
        <SheetNav>
          <IconButton $w={26} aria-label="이전 시트"><Arrow dir="left" color="#b9bbbb" /></IconButton>
          <IconButton $w={26} aria-label="다음 시트"><Arrow dir="right" color="#b9bbbb" /></IconButton>
        </SheetNav>
        <SheetTab>Sheet1</SheetTab>
        <IconButton $w={72} aria-label="새 시트">
          <Svg width="15" height="15" viewBox="0 0 15 15" fill="none" stroke="#6c6e6e">
            <circle cx="7.500" cy="7.500" r="6.800" />
            <path d="M7.500 4v7M4 7.500h7" strokeWidth="1.800" />
          </Svg>
        </IconButton>
        <Spacer />
        <Grip><Dots /></Grip>
        <HScroll>
          <ScrollButton aria-label="왼쪽으로"><Arrow dir="left" /></ScrollButton>
          <Thumb $grow={226} />
          <Track $grow={34} />
          <ScrollButton aria-label="오른쪽으로"><Arrow dir="right" /></ScrollButton>
        </HScroll>
      </SheetTabs>

      <StatusBar>
        준비
        <Spacer />
        <IconButton $w={34} $on aria-label="기본 보기">
          <Svg width="12" height="12" viewBox="0 0 12 12" fill="none" stroke="#6c6e6e">
            <path d="M.5.5h11v11H.5zM.5 4h11M.5 8h11M4 .5v11M8 .5v11" />
          </Svg>
        </IconButton>
        <IconButton $w={35} aria-label="페이지 레이아웃 보기">
          <Svg width="13" height="12" viewBox="0 0 13 12" fill="none" stroke="#6c6e6e">
            <path d="M.5.5h12v11H.5zM3.500 2.500h6v7h-6zM5 4.500h3M5 6h3M5 7.500h3" />
          </Svg>
        </IconButton>
        <IconButton $w={33} aria-label="페이지 나누기 미리 보기">
          <Svg width="13" height="12" viewBox="0 0 13 12" fill="none" stroke="#6c6e6e">
            <path d="M.5 11.500V.5h12v11zM4.500.5v6h4v-6M.5 6.500h4" />
          </Svg>
        </IconButton>
        <IconButton $w={16} aria-label="축소">
          <Svg width="6" height="6" viewBox="0 0 6 6"><path d="M0 3h6" stroke="#5c5e5e" strokeWidth="1.800" /></Svg>
        </IconButton>
        <Slider type="range" aria-label="확대/축소" min={0} max={200} defaultValue={100} />
        <IconButton $w={12} aria-label="확대">
          <Svg width="8" height="8" viewBox="0 0 8 8"><path d="M0 4h8M4 0v8" stroke="#5c5e5e" strokeWidth="1.800" /></Svg>
        </IconButton>
        <ZoomText>100 %</ZoomText>
      </StatusBar>
      <Wallpaper />
    </Page>
  );
}
